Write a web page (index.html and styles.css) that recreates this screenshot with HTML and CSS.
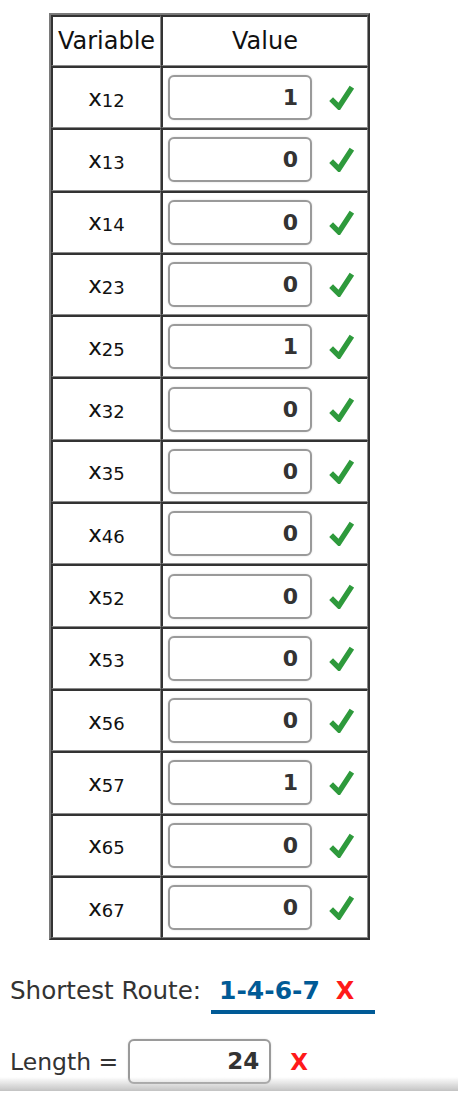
FILE: index.html
```html
<!DOCTYPE html>
<html>
<head>
<meta charset="utf-8">
<link rel="stylesheet" href="styles.css">
</head>
<body>
<div class="page">
  <table class="grid">
    <thead>
      <tr><th class="c-var">Variable</th><th class="c-val">Value</th></tr>
    </thead>
    <tbody id="rows">
      <tr><td class="c-var">x<span class="sub">12</span></td><td class="c-val"><div class="cell"><div class="box">1</div><svg class="ok" viewBox="0 0 24 26"><path d="M2 15.5 L9.5 23 L22 4"/></svg></div></td></tr>
      <tr><td class="c-var">x<span class="sub">13</span></td><td class="c-val"><div class="cell"><div class="box">0</div><svg class="ok" viewBox="0 0 24 26"><path d="M2 15.5 L9.5 23 L22 4"/></svg></div></td></tr>
      <tr><td class="c-var">x<span class="sub">14</span></td><td class="c-val"><div class="cell"><div class="box">0</div><svg class="ok" viewBox="0 0 24 26"><path d="M2 15.5 L9.5 23 L22 4"/></svg></div></td></tr>
      <tr><td class="c-var">x<span class="sub">23</span></td><td class="c-val"><div class="cell"><div class="box">0</div><svg class="ok" viewBox="0 0 24 26"><path d="M2 15.5 L9.5 23 L22 4"/></svg></div></td></tr>
      <tr><td class="c-var">x<span class="sub">25</span></td><td class="c-val"><div class="cell"><div class="box">1</div><svg class="ok" viewBox="0 0 24 26"><path d="M2 15.5 L9.5 23 L22 4"/></svg></div></td></tr>
      <tr><td class="c-var">x<span class="sub">32</span></td><td class="c-val"><div class="cell"><div class="box">0</div><svg class="ok" viewBox="0 0 24 26"><path d="M2 15.5 L9.5 23 L22 4"/></svg></div></td></tr>
      <tr><td class="c-var">x<span class="sub">35</span></td><td class="c-val"><div class="cell"><div class="box">0</div><svg class="ok" viewBox="0 0 24 26"><path d="M2 15.5 L9.5 23 L22 4"/></svg></div></td></tr>
      <tr><td class="c-var">x<span class="sub">46</span></td><td class="c-val"><div class="cell"><div class="box">0</div><svg class="ok" viewBox="0 0 24 26"><path d="M2 15.5 L9.5 23 L22 4"/></svg></div></td></tr>
      <tr><td class="c-var">x<span class="sub">52</span></td><td class="c-val"><div class="cell"><div class="box">0</div><svg class="ok" viewBox="0 0 24 26"><path d="M2 15.5 L9.5 23 L22 4"/></svg></div></td></tr>
      <tr><td class="c-var">x<span class="sub">53</span></td><td class="c-val"><div class="cell"><div class="box">0</div><svg class="ok" viewBox="0 0 24 26"><path d="M2 15.5 L9.5 23 L22 4"/></svg></div></td></tr>
      <tr><td class="c-var">x<span class="sub">56</span></td><td class="c-val"><div class="cell"><div class="box">0</div><svg class="ok" viewBox="0 0 24 26"><path d="M2 15.5 L9.5 23 L22 4"/></svg></div></td></tr>
      <tr><td class="c-var">x<span class="sub">57</span></td><td class="c-val"><div class="cell"><div class="box">1</div><svg class="ok" viewBox="0 0 24 26"><path d="M2 15.5 L9.5 23 L22 4"/></svg></div></td></tr>
      <tr><td class="c-var">x<span class="sub">65</span></td><td class="c-val"><div class="cell"><div class="box">0</div><svg class="ok" viewBox="0 0 24 26"><path d="M2 15.5 L9.5 23 L22 4"/></svg></div></td></tr>
      <tr><td class="c-var">x<span class="sub">67</span></td><td class="c-val"><div class="cell"><div class="box">0</div><svg class="ok" viewBox="0 0 24 26"><path d="M2 15.5 L9.5 23 L22 4"/></svg></div></td></tr>
    </tbody>
  </table>

  <div class="route">
    <span class="label">Shortest Route:</span>
    <span class="answer"><span class="path">1-4-6-7</span><span class="bad">X</span></span>
  </div>

  <div class="length">
    <span class="label">Length =</span>
    <div class="box lbox">24</div>
    <span class="bad">X</span>
  </div>
</div>
<div class="shade"></div>
</body>
</html>
```

FILE: styles.css
```css
html, body {
  margin: 0;
  padding: 0;
  background: #ffffff;
}
body {
  font-family: "DejaVu Sans", Verdana, sans-serif;
  color: #222;
}
.page {
  padding: 13px 0 0 10px;
}
.grid {
  margin-left: 39px;
  border-collapse: separate;
  border-spacing: 0;
  border-style: solid;
  border-width: 2px;
  border-color: #7a7a7a #333 #333 #7a7a7a;
}
.grid th, .grid td {
  border-style: solid;
  border-width: 2px 1px 1px 2px;
  border-color: #333 #8a8a8a #8a8a8a #333;
  padding: 0;
  text-align: center;
  font-weight: normal;
}
.grid th {
  height: 48px;
  font-size: 24px;
  color: #111;
}
.grid td {
  height: 59.3px;
}
.c-var {
  width: 107px;
  font-size: 23px;
  color: #111;
}
.grid th.c-var {
  font-size: 24px;
}
.c-val {
  width: 204px;
}
.sub {
  font-size: 18px;
  position: relative;
  top: 1px;
}
.cell {
  display: flex;
  align-items: center;
  padding-left: 5px;
  gap: 17px;
}
.box {
  box-sizing: border-box;
  width: 144px;
  height: 45px;
  border: 2px solid #9a9a9a;
  border-radius: 6px;
  box-shadow: 0 0 2px rgba(0,0,0,0.15);
  background: #fff;
  text-align: right;
  padding-right: 12px;
  font-size: 22px;
  font-weight: bold;
  line-height: 41px;
  color: #333;
}
.ok {
  width: 25px;
  height: 27px;
  margin-top: -2px;
}
.ok path {
  fill: none;
  stroke: #2e9a3c;
  stroke-width: 5.2;
  stroke-linejoin: miter;
}
.route {
  margin-top: 36px;
  display: flex;
  align-items: baseline;
  font-size: 24.6px;
}
.label {
  color: #333;
}
.answer {
  margin-left: 10px;
  width: 156px;
  padding-left: 8px;
  padding-bottom: 5px;
  border-bottom: 4px solid #005a96;
  display: flex;
  align-items: baseline;
}
.path {
  color: #005a96;
  font-weight: bold;
  font-size: 25px;
}
.bad {
  color: #ff1a1a;
  font-weight: bold;
  font-size: 24px;
  margin-left: 16px;
}
.length {
  margin-top: 25px;
  display: flex;
  align-items: center;
  font-size: 23.5px;
}
.lbox {
  margin-left: 10px;
  width: 143px;
  font-size: 23px;
  padding-right: 10px;
}
.length .bad {
  margin-left: 19px;
  font-size: 23px;
}
.shade {
  position: fixed;
  left: 0;
  right: 0;
  bottom: 13px;
  height: 14px;
  background: linear-gradient(to bottom, rgba(200,200,200,0), rgba(195,195,195,1));
}
```
